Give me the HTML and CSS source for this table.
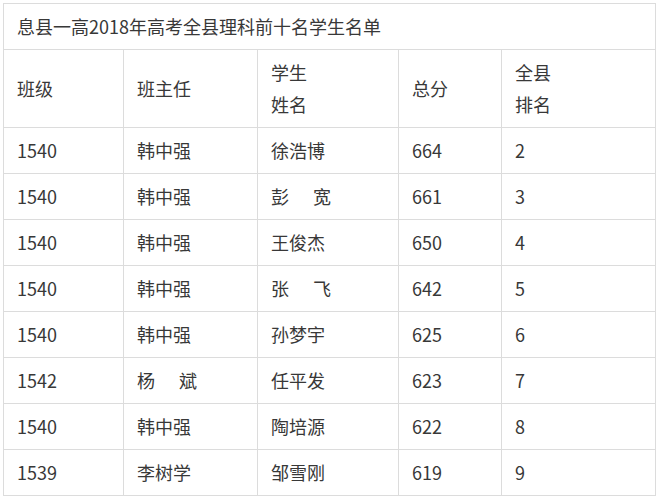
FILE: index.html
```html
<!DOCTYPE html>
<html lang="zh">
<head>
<meta charset="utf-8">
<link rel="stylesheet" href="styles.css">
</head>
<body>
<table class="rank">
<colgroup>
<col class="c1"><col class="c2"><col class="c3"><col class="c4"><col class="c5">
</colgroup>
<tr><td colspan="5" class="title">息县一高2018年高考全县理科前十名学生名单</td></tr>
<tr class="head"><td>班级</td><td>班主任</td><td>学生<br>姓名</td><td>总分</td><td>全县<br>排名</td></tr>
<tr><td>1540</td><td>韩中强</td><td>徐浩博</td><td>664</td><td>2</td></tr>
<tr><td>1540</td><td>韩中强</td><td>彭<span class="gap"></span>宽</td><td>661</td><td>3</td></tr>
<tr><td>1540</td><td>韩中强</td><td>王俊杰</td><td>650</td><td>4</td></tr>
<tr><td>1540</td><td>韩中强</td><td>张<span class="gap"></span>飞</td><td>642</td><td>5</td></tr>
<tr><td>1540</td><td>韩中强</td><td>孙梦宇</td><td>625</td><td>6</td></tr>
<tr><td>1542</td><td>杨<span class="gap"></span>斌</td><td>任平发</td><td>623</td><td>7</td></tr>
<tr><td>1540</td><td>韩中强</td><td>陶培源</td><td>622</td><td>8</td></tr>
<tr><td>1539</td><td>李树学</td><td>邹雪刚</td><td>619</td><td>9</td></tr>
</table>
</body>
</html>
```
FILE: styles.css
```css
html, body {
  margin: 0;
  background: #fff;
}
body {
  padding: 3px 0 0 3px;
  font-family: "Noto Sans CJK SC", "Noto Sans", sans-serif;
  color: #383838;
}
.rank {
  border-collapse: collapse;
  table-layout: fixed;
  width: 653px;
}
.c1 { width: 120px; }
.c2 { width: 134px; }
.c3 { width: 141px; }
.c4 { width: 103px; }
.c5 { width: 154px; }
.rank td {
  border: 1px solid #dcdcdc;
  padding: 6px 13px 7px;
  font-size: 18px;
  line-height: 32px;
  vertical-align: middle;
  white-space: nowrap;
}
.gap {
  display: inline-block;
  width: 24px;
}
```
